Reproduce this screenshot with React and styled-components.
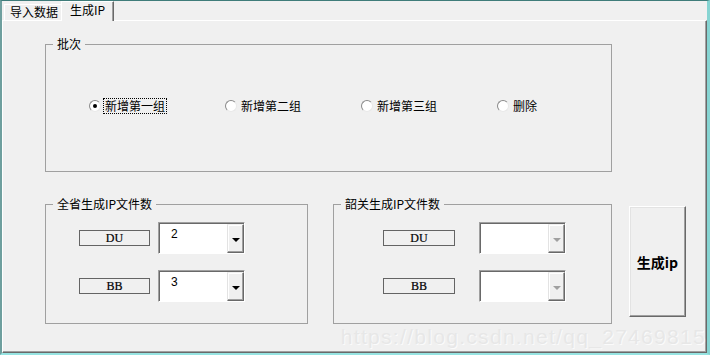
import React from 'react';
import styled, { createGlobalStyle } from 'styled-components';

const cjk = `"Noto Sans CJK SC", "Noto Sans", sans-serif`;

const Global = createGlobalStyle`
  html, body { margin: 0; padding: 0; background: #f0f0f0; }
  body { width: 710px; height: 355px; overflow: hidden; }
  * { box-sizing: border-box; }
`;

const Window = styled.div`
  position: relative;
  width: 710px;
  height: 355px;
  background: #f0f0f0;
  border-top: 1px solid #3f7c7a;
  border-left: 2px solid #6e9f9e;
  border-right: 3px solid #86d4d2;
  border-bottom: 2px solid #96e4e2;
  display: flex;
  flex-direction: column;
  font-family: ${cjk};
  color: #000;
`;

const TabStrip = styled.div`
  display: flex;
  align-items: flex-end;
  height: 19px;
  padding-left: 2px;
`;

const Tab = styled.div`
  position: relative;
  z-index: ${(p) => (p.$active ? 2 : 1)};
  height: ${(p) => (p.$active ? '20px' : '16px')};
  margin-bottom: ${(p) => (p.$active ? '-1px' : '0')};
  margin-left: ${(p) => (p.$active ? '-2px' : '0')};
  padding: ${(p) => (p.$active ? '1px 8px 0 8px' : '0 4px 0 5px')};
  background: #f0f0f0;
  border-top: 1px solid #fff;
  border-left: 1px solid #fff;
  border-right: 1px solid #696969;
  box-shadow: inset -1px 0 0 #a0a0a0;
  font-size: 12px;
  line-height: 14px;
  white-space: nowrap;
`;

const Panel = styled.div`
  flex: 1;
  display: flex;
  flex-direction: column;
  border-top: 1px solid #fff;
  border-left: 1px solid #fff;
  border-right: 1px solid #696969;
  border-bottom: 1px solid #696969;
  box-shadow: inset -1px -1px 0 #a0a0a0;
  padding: 16px 0 0 42px;
`;

const Group = styled.fieldset`
  margin: 0;
  padding: 0;
  width: ${(p) => p.$w}px;
  height: ${(p) => p.$h}px;
  border: 1px solid #a0a0a0;
  min-width: 0;
`;

const Legend = styled.legend`
  margin-left: 7px;
  padding: 0 4px;
  font-size: 12px;
  line-height: 14px;
`;

const RadioRow = styled.div`
  display: grid;
  grid-template-columns: repeat(4, 136px);
  margin-top: 48px;
  padding-left: 43px;
`;

const RadioItem = styled.div`
  display: flex;
  align-items: center;
  gap: 2px;
  font-size: 12px;
  line-height: 12px;
`;

const RadioCircle = styled.span`
  width: 12px;
  height: 12px;
  border-radius: 50%;
  background: #fff;
  border: 1px solid;
  border-color: #8a8a8a #e8e8e8 #e8e8e8 #8a8a8a;
  display: flex;
  align-items: center;
  justify-content: center;
  &::after {
    content: '';
    width: 4px;
    height: 4px;
    border-radius: 50%;
    background: ${(p) => (p.$checked ? '#000' : 'transparent')};
  }
`;

const RadioLabel = styled.span`
  padding: 1px 1px 0 1px;
  height: 14px;
  outline: ${(p) => (p.$focus ? '1px dotted #000' : 'none')};
  outline-offset: 0;
  margin-left: 1px;
`;

const BottomRow = styled.div`
  display: flex;
  align-items: flex-start;
  gap: 25px;
  margin-top: 25px;
`;

const FieldRows = styled.div`
  display: flex;
  flex-direction: column;
  gap: 16px;
  padding: 11px 0 0 ${(p) => p.$pl}px;
`;

const FieldRow = styled.div`
  display: flex;
  align-items: center;
  gap: ${(p) => p.$gap}px;
`;

const TagBox = styled.div`
  width: ${(p) => p.$w}px;
  height: 16px;
  border: 1px solid #646464;
  font-family: "Liberation Serif", "DejaVu Serif", serif;
  font-size: 12px;
  line-height: 14px;
  text-align: center;
  -webkit-text-stroke: 0.2px #000;
`;

const Combo = styled.div`
  width: 87px;
  height: 32px;
  display: flex;
  background: #fff;
  border-top: 1px solid #a0a0a0;
  border-left: 1px solid #a0a0a0;
  border-right: 1px solid #fff;
  border-bottom: 1px solid #fff;
  box-shadow: inset 1px 1px 0 #696969;
`;

const ComboValue = styled.div`
  flex: 1;
  padding: 4px 0 0 12px;
  font-family: "Liberation Sans", Arial, sans-serif;
  font-size: 12px;
  line-height: 14px;
`;

const ComboButton = styled.div`
  width: 17px;
  margin: 1px 0 0 0;
  background: #f0f0f0;
  border-top: 1px solid #f0f0f0;
  border-left: 1px solid #e3e3e3;
  border-right: 1px solid #696969;
  border-bottom: 1px solid #696969;
  box-shadow: inset -1px -1px 0 #a0a0a0, inset 1px 1px 0 #fff;
  display: flex;
  align-items: center;
  justify-content: center;
  padding-top: 3px;
  &::after {
    content: '';
    width: 0;
    height: 0;
    border-left: 4px solid transparent;
    border-right: 4px solid transparent;
    border-top: 4px solid ${(p) => (p.$disabled ? '#a0a0a0' : '#000')};
  }
`;

const ActionButton = styled.button`
  margin: 9px 0 0 -8px;
  width: 57px;
  height: 111px;
  padding: 0;
  background: #f0f0f0;
  border-top: 1px solid #fff;
  border-left: 1px solid #fff;
  border-right: 1px solid #696969;
  border-bottom: 1px solid #696969;
  box-shadow: inset -1px -1px 0 #a0a0a0, inset 1px 1px 0 #e3e3e3;
  font-family: ${cjk};
  font-weight: bold;
  font-size: 14px;
  color: #000;
`;

const Watermark = styled.div`
  position: absolute;
  right: 1px;
  top: 324px;
  font-family: "Liberation Sans", Arial, sans-serif;
  font-size: 21px;
  letter-spacing: 1.3px;
  color: #e7e7e7;
  text-shadow: 1px 1px 0 #fbfbfb;
  pointer-events: none;
`;

function ComboBox({ value, disabled }) {
  return (
    <Combo>
      <ComboValue>{value}</ComboValue>
      <ComboButton $disabled={disabled} />
    </Combo>
  );
}

function CountGroup({ title, w, pl, gap, tagW, values, disabled }) {
  return (
    <Group $w={w} $h={127}>
      <Legend>{title}</Legend>
      <FieldRows $pl={pl}>
        {['DU', 'BB'].map((t, i) => (
          <FieldRow key={t} $gap={gap}>
            <TagBox $w={tagW}>{t}</TagBox>
            <ComboBox value={values[i]} disabled={disabled} />
          </FieldRow>
        ))}
      </FieldRows>
    </Group>
  );
}

export default function App() {
  const radios = ['新增第一组', '新增第二组', '新增第三组', '删除'];
  return (
    <>
      <Global />
      <Window>
        <TabStrip>
          <Tab>导入数据</Tab>
          <Tab $active>生成IP</Tab>
        </TabStrip>
        <Panel>
          <Group $w={567} $h={135}>
            <Legend>批次</Legend>
            <RadioRow>
              {radios.map((r, i) => (
                <RadioItem key={r}>
                  <RadioCircle $checked={i === 0} />
                  <RadioLabel $focus={i === 0}>{r}</RadioLabel>
                </RadioItem>
              ))}
            </RadioRow>
          </Group>
          <BottomRow>
            <CountGroup title="全省生成IP文件数" w={263} pl={33} gap={8} tagW={71} values={['2', '3']} />
            <CountGroup title="韶关生成IP文件数" w={279} pl={49} gap={24} tagW={72} values={['', '']} disabled />
            <ActionButton>生成ip</ActionButton>
          </BottomRow>
        </Panel>
        <Watermark>https://blog.csdn.net/qq_27469815</Watermark>
      </Window>
    </>
  );
}
